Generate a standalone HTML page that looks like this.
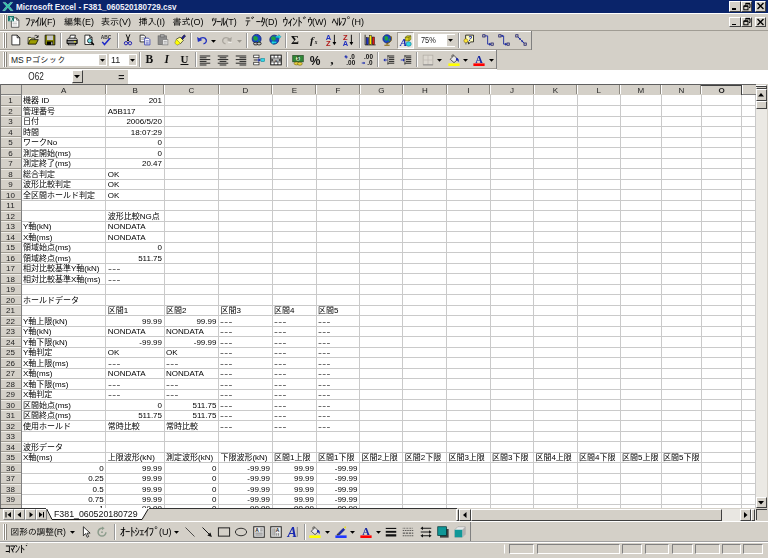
<!DOCTYPE html><html lang="ja"><head><meta charset="utf-8"><title>Microsoft Excel - F381_060520180729.csv</title><style>
html,body{margin:0;padding:0;}
body{width:768px;height:558px;overflow:hidden;background:#d4d0c8;position:relative;filter:blur(0.3px);font-family:"Liberation Sans","IPAGothic","Noto Sans CJK JP",sans-serif;color:#000;}
.a{position:absolute;}
.t{position:absolute;white-space:nowrap;line-height:1;}
.ui{font-size:9px;}
.cell{font-size:8px;color:#000;font-family:"Liberation Sans","Noto Sans CJK JP","IPAGothic",sans-serif;}
.dash{letter-spacing:.3px;transform:scaleX(1.45);transform-origin:0 50%;}
.hk{font-size:11.6px;letter-spacing:-1.05px;line-height:0;position:relative;top:1.3px;}
.hl{position:absolute;height:1px;background:#cacaca;left:21px;}
.vl{position:absolute;width:1px;background:#cacaca;}
.hd{position:absolute;background:#d4d0c8;font-size:8px;text-align:center;color:#222;line-height:1;}
.sep{position:absolute;width:1px;background:#808080;box-shadow:1px 0 0 #fff;}
.grip{position:absolute;width:2px;border-left:1px solid #fff;border-right:1px solid #808080;box-sizing:border-box;}
.btn3d{position:absolute;box-sizing:border-box;background:#d4d0c8;border:1px solid;border-color:#fff #404040 #404040 #fff;}
.sunk{position:absolute;box-sizing:border-box;border:1px solid;border-color:#808080 #fff #fff #808080;}
svg{position:absolute;overflow:visible;}
</style></head><body>
<div class="a" style="left:0;top:0;width:768px;height:12.8px;background:#0a246a"></div>
<div class="t" style="left:15.5px;top:2.2px;font-size:9.6px;font-weight:bold;color:#eef0fa;transform:scaleX(0.848);transform-origin:0 50%" id="title">Microsoft Excel - F381_060520180729.csv</div>
<svg style="left:2px;top:1.3px" width="11" height="11" viewBox="0 0 16 16"><rect x="0" y="0" width="16" height="16" fill="none"/><path d="M1.500 2l5 5.500l-5.500 6.500h3.500l4-4.800l4 4.800h3.500l-5.500-6.500l5-5.500h-3.500l-3.500 3.800l-3.500-3.800z" fill="#2cc8a8" stroke="#bff5e8" stroke-width=".6"/></svg><div class="btn3d" style="left:729px;top:1.2px;width:11.5px;height:10.500px"></div><div class="a" style="left:731.5px;top:8.2px;width:4.500px;height:1.500px;background:#000"></div><div class="btn3d" style="left:740.6px;top:1.2px;width:11.5px;height:10.500px"></div><svg style="left:742.6px;top:2.7px" width="8" height="8" viewBox="0 0 8 8"><path d="M2.500 0.800h4.500v3.800h-1M2.500 1.500v1" fill="none" stroke="#000" stroke-width="1"/><path d="M2.500 0.500h4.500" stroke="#000" stroke-width="1.400"/><rect x="0.800" y="3.200" width="4.200" height="3.600" fill="none" stroke="#000" stroke-width="1"/><path d="M0.800 3h4.200" stroke="#000" stroke-width="1.400"/></svg><div class="btn3d" style="left:754.5px;top:1.2px;width:11.5px;height:10.500px"></div><svg style="left:756.7px;top:3.4px" width="7" height="6" viewBox="0 0 7 6"><path d="M0.500 0l6 6M6.500 0l-6 6" stroke="#000" stroke-width="1.400"/></svg>
<div class="a" style="left:0;top:13.2px;width:768px;height:1px;background:#fff"></div>
<div class="t ui menu" style="left:24px;top:17px;width:32.5px;text-align:center;line-height:11px"><span class="hk">ﾌｧｲﾙ</span>(F)</div>
<div class="t ui menu" style="left:64px;top:17px;width:30px;text-align:center;line-height:11px">編集(E)</div>
<div class="t ui menu" style="left:101px;top:17px;width:30px;text-align:center;line-height:11px">表示(V)</div>
<div class="t ui menu" style="left:138.5px;top:17px;width:26.5px;text-align:center;line-height:11px">挿入(I)</div>
<div class="t ui menu" style="left:172.5px;top:17px;width:29px;text-align:center;line-height:11px">書式(O)</div>
<div class="t ui menu" style="left:209px;top:17px;width:30px;text-align:center;line-height:11px"><span class="hk">ﾂｰﾙ</span>(T)</div>
<div class="t ui menu" style="left:245px;top:17px;width:31px;text-align:center;line-height:11px"><span class="hk">ﾃﾞｰﾀ</span>(D)</div>
<div class="t ui menu" style="left:282.5px;top:17px;width:42.5px;text-align:center;line-height:11px"><span class="hk">ｳｨﾝﾄﾞｳ</span>(W)</div>
<div class="t ui menu" style="left:331.5px;top:17px;width:30px;text-align:center;line-height:11px"><span class="hk">ﾍﾙﾌﾟ</span>(H)</div>
<div class="a" style="left:0;top:29.8px;width:768px;height:1px;background:#a09c94"></div>
<div class="a" style="left:0;top:30.8px;width:768px;height:1px;background:#fff"></div>
<div class="a" style="left:0;top:48.9px;width:768px;height:1px;background:#a09c94"></div>
<div class="a" style="left:0;top:49.9px;width:768px;height:1px;background:#fff"></div>
<div class="a" style="left:0;top:68px;width:768px;height:1px;background:#a09c94"></div>
<div class="a" style="left:0;top:69px;width:768px;height:1px;background:#fff"></div>
<svg style="left:8px;top:16px" width="12" height="12" viewBox="0 0 16 16"><path d="M4.500 2.500h7l3 3v9.500h-10z" fill="#fff" stroke="#333"/><path d="M11.500 2.500v3h3" fill="none" stroke="#333"/><path d="M6 8h6M6 10h6M6 12h6" stroke="#aaa" stroke-width=".8"/><rect x="0" y="0" width="8" height="7" fill="#18786c"/><text x="4" y="6" font-size="6.500" font-weight="bold" text-anchor="middle" style="font-family:'Liberation Sans',sans-serif" fill="#fff">X</text></svg><div class="btn3d" style="left:729px;top:16.5px;width:11.5px;height:10.500px"></div><div class="a" style="left:731.5px;top:23.5px;width:4.500px;height:1.500px;background:#000"></div><div class="btn3d" style="left:740.6px;top:16.5px;width:11.5px;height:10.500px"></div><svg style="left:742.6px;top:18px" width="8" height="8" viewBox="0 0 8 8"><path d="M2.500 0.800h4.500v3.800h-1M2.500 1.500v1" fill="none" stroke="#000" stroke-width="1"/><path d="M2.500 0.500h4.500" stroke="#000" stroke-width="1.400"/><rect x="0.800" y="3.200" width="4.200" height="3.600" fill="none" stroke="#000" stroke-width="1"/><path d="M0.800 3h4.200" stroke="#000" stroke-width="1.400"/></svg><div class="btn3d" style="left:754.5px;top:16.5px;width:11.5px;height:10.500px"></div><svg style="left:756.7px;top:18.7px" width="7" height="6" viewBox="0 0 7 6"><path d="M0.500 0l6 6M6.500 0l-6 6" stroke="#000" stroke-width="1.400"/></svg><div class="a" style="left:2.5px;top:15px;width:1px;height:14px;background:#fff"></div><div class="a" style="left:3.5px;top:15px;width:1px;height:14px;background:#8c8880"></div><div class="a" style="left:4.8px;top:15px;width:1px;height:14px;background:#fff"></div><div class="a" style="left:5.8px;top:15px;width:1px;height:14px;background:#8c8880"></div><div class="a" style="left:2.5px;top:32.5px;width:1px;height:15.5px;background:#fff"></div><div class="a" style="left:3.5px;top:32.5px;width:1px;height:15.5px;background:#8c8880"></div><div class="a" style="left:4.8px;top:32.5px;width:1px;height:15.5px;background:#fff"></div><div class="a" style="left:5.8px;top:32.5px;width:1px;height:15.5px;background:#8c8880"></div><svg style="left:9.5px;top:34.2px" width="12" height="12" viewBox="0 0 16 16"><path d="M2.5 1.5h7l3.5 3.5v9.5h-10.5z" fill="#fff" stroke="#000"/><path d="M9.5 1.5v3.5h3.5" fill="none" stroke="#000"/></svg><svg style="left:27px;top:34.2px" width="12" height="12" viewBox="0 0 16 16"><path d="M1.5 13.5v-9h3l1 1h5v2" fill="#ffff9c" stroke="#000"/><path d="M1.5 13.5l2.5-6h11l-3 6z" fill="#9c9c00" stroke="#000"/><path d="M10 2.5c2-1.5 4-.5 4.5 1.5M14.8 1.5v3h-3" fill="none" stroke="#000"/></svg><svg style="left:44.3px;top:34.2px" width="12" height="12" viewBox="0 0 16 16"><path d="M1.5 1.5h13v13h-12l-1-1z" fill="#808000" stroke="#000"/><rect x="4" y="2" width="8" height="6" fill="#c6c6c6"/><rect x="4" y="10" width="8" height="4.5" fill="#000"/><rect x="9.5" y="11" width="1.8" height="3" fill="#c6c6c6"/></svg><svg style="left:66px;top:34.2px" width="12" height="12" viewBox="0 0 16 16"><path d="M4.5 6.5l1.5-5h6.5l-1 5z" fill="#fff" stroke="#000"/><path d="M1.5 7.5l2-2h10l1.500 2v5h-13.500z" fill="#c6c6c6" stroke="#000"/><rect x="1.500" y="8.5" width="13" height="4" fill="#848484" stroke="#000"/><rect x="3" y="12.500" width="10" height="2" fill="#fff" stroke="#000"/><rect x="10.5" y="9.800" width="2.500" height="1.200" fill="#ffff00"/></svg><svg style="left:83px;top:34.2px" width="12" height="12" viewBox="0 0 16 16"><path d="M2.500 1.500h6.500l3 3v9.500h-9.500z" fill="#fff" stroke="#000"/><path d="M9 1.500v3h3" fill="none" stroke="#000"/><circle cx="9" cy="9" r="3" fill="#7ce0e8" stroke="#000"/><path d="M11.200 11.200l3.300 3.300" stroke="#000" stroke-width="2"/></svg><svg style="left:100.3px;top:34.2px" width="12" height="12" viewBox="0 0 16 16"><text x="8" y="6.200" font-size="6.500" font-weight="bold" text-anchor="middle" style="font-family:'Liberation Sans',sans-serif" fill="#333">ABC</text><path d="M3 10.500l3 3.500l7-8" fill="none" stroke="#1c28c8" stroke-width="2"/></svg><svg style="left:121.5px;top:34.2px" width="12" height="12" viewBox="0 0 16 16"><path d="M5.500 0.500l3.500 9M10.500 0.500l-3.500 9" stroke="#000" stroke-width="1.200" fill="none"/><circle cx="5.300" cy="12.300" r="2.200" fill="none" stroke="#2020b0" stroke-width="1.300"/><circle cx="10.700" cy="12.300" r="2.200" fill="none" stroke="#2020b0" stroke-width="1.300"/></svg><svg style="left:139px;top:34.2px" width="12" height="12" viewBox="0 0 16 16"><path d="M1.500 1.500h5l2 2v7h-7z" fill="#fff" stroke="#000"/><path d="M3 5h4M3 7h4" stroke="#555" stroke-width=".8"/><path d="M7.500 5.500h5l2 2v7h-7z" fill="#fff" stroke="#1c28a8"/><path d="M9 9h4M9 11h4M9 13h4" stroke="#1c28a8" stroke-width=".8"/></svg><svg style="left:156.5px;top:34.2px" width="12" height="12" viewBox="0 0 16 16"><rect x="1.500" y="2.500" width="11" height="11.500" fill="#8c8c8c" stroke="#6a6a6a"/><rect x="4.500" y="1" width="5" height="3" fill="#b0b0b0" stroke="#6a6a6a"/><rect x="7.500" y="7.500" width="7" height="7" fill="#e8e8e8" stroke="#808080"/><path d="M9 10h4M9 12h4" stroke="#909090" stroke-width=".8"/></svg><svg style="left:174px;top:34.2px" width="12" height="12" viewBox="0 0 16 16"><path d="M9.500 5.500l4-4.500l2 1.800l-4 4.500z" fill="#202090" stroke="#000" stroke-width=".6"/><path d="M3 7l5-3l4.500 4.500l-4 4.500z" fill="#ffff80" stroke="#000" stroke-width=".8"/><path d="M3 7l-2 5l3 3l4.500-2.200" fill="#ffff00" stroke="#555" stroke-width=".6"/></svg><svg style="left:195.5px;top:34.2px" width="12" height="12" viewBox="0 0 16 16"><path d="M4 7.500c3-3.500 8-3.500 9.500 0c1 2.500-.500 5-3.500 5.500" fill="none" stroke="#2030c0" stroke-width="1.800"/><path d="M1.500 4l1 6.500l6-2.500z" fill="#2030c0"/></svg><svg style="left:220.7px;top:34.2px" width="12" height="12" viewBox="0 0 16 16"><path d="M12 7.500c-3-3.500-8-3.500-9.500 0c-1 2.500.500 5 3.500 5.500" fill="none" stroke="#aaa69e" stroke-width="1.800"/><path d="M14.500 4l-1 6.500l-6-2.500z" fill="#aaa69e"/><path d="M14.500 11l-5 .500" stroke="#fff" stroke-width=".800"/></svg><svg style="left:250.7px;top:34.2px" width="12" height="12" viewBox="0 0 16 16"><circle cx="7.500" cy="6.500" r="6" fill="#1848c8" stroke="#102070"/><path d="M4 3c2-1 4 0 5 2s-1 4-3 4s-3-2-3-4z" fill="#20a040"/><path d="M10 8c1 0 2 1 2 2.500l-2 1z" fill="#20a040"/><rect x="3.500" y="11" width="5.500" height="3.500" rx="1.700" fill="#c6c6c6" stroke="#000" stroke-width="1"/><rect x="8" y="11" width="5.500" height="3.500" rx="1.700" fill="#c6c6c6" stroke="#000" stroke-width="1"/></svg><svg style="left:268.5px;top:34.2px" width="12" height="12" viewBox="0 0 16 16"><circle cx="7" cy="7.500" r="6" fill="#1848c8" stroke="#102070"/><path d="M3 4c2-2 5-1 6 1s-1 4-3 4s-4-2-3-5z" fill="#20a040"/><path d="M9 2.500h4v-1.800l3 3l-3 3v-1.800h-4z" fill="#18d8e8" stroke="#0a6a80" stroke-width=".5"/><path d="M10 10h-4v-1.800l-3 3l3 3v-1.800h4z" fill="#18d8e8" stroke="#0a6a80" stroke-width=".5"/></svg><svg style="left:289px;top:34.2px" width="12" height="12" viewBox="0 0 16 16"><text x="8" y="13.500" font-size="16" font-weight="bold" text-anchor="middle" style="font-family:'Liberation Serif',serif" fill="#111">Σ</text></svg><svg style="left:307px;top:34.2px" width="12" height="12" viewBox="0 0 16 16"><text x="6.500" y="13" font-size="15" font-weight="bold" font-style="italic" text-anchor="middle" style="font-family:'Liberation Serif',serif" fill="#111">f</text><text x="12" y="13.500" font-size="7" font-weight="bold" font-style="italic" text-anchor="middle" style="font-family:'Liberation Serif',serif" fill="#111">x</text></svg><svg style="left:324.5px;top:34.2px" width="12" height="12" viewBox="0 0 16 16"><text x="4.500" y="7.500" font-size="10" font-weight="bold" text-anchor="middle" style="font-family:'Liberation Sans',sans-serif" fill="#2030c0">A</text><text x="4.500" y="15.500" font-size="10" font-weight="bold" text-anchor="middle" style="font-family:'Liberation Sans',sans-serif" fill="#b01818">Z</text><path d="M12.500 1v11" stroke="#000" stroke-width="1.200"/><path d="M10 10.500h5l-2.500 4.500z" fill="#000"/></svg><svg style="left:342px;top:34.2px" width="12" height="12" viewBox="0 0 16 16"><text x="4.500" y="7.500" font-size="10" font-weight="bold" text-anchor="middle" style="font-family:'Liberation Sans',sans-serif" fill="#b01818">Z</text><text x="4.500" y="15.500" font-size="10" font-weight="bold" text-anchor="middle" style="font-family:'Liberation Sans',sans-serif" fill="#2030c0">A</text><path d="M12.500 1v11" stroke="#000" stroke-width="1.200"/><path d="M10 10.500h5l-2.500 4.500z" fill="#000"/></svg><svg style="left:363.5px;top:34.2px" width="12" height="12" viewBox="0 0 16 16"><path d="M1.500 1v13.500h14" fill="none" stroke="#000"/><rect x="3" y="5" width="3" height="9" fill="#2030c8" stroke="#000" stroke-width=".6"/><rect x="7" y="2" width="3" height="12" fill="#ffe800" stroke="#000" stroke-width=".6"/><rect x="11" y="4" width="3" height="10" fill="#e01818" stroke="#000" stroke-width=".6"/></svg><svg style="left:381px;top:34.2px" width="12" height="12" viewBox="0 0 16 16"><circle cx="8" cy="6.500" r="5.500" fill="#1848c8" stroke="#102070"/><path d="M5 3c2-1 4 0 4.500 2s-1 4-2.500 4s-3-3-2-6z" fill="#20a040"/><path d="M10.500 6c1 0 2 1 1.500 3l-2 1z" fill="#20a040"/><path d="M13 2.500c2.500 4 .5 9-5 10" fill="none" stroke="#806000" stroke-width="1.200"/><path d="M8 12v2.500M4.500 15h7" stroke="#806000" stroke-width="1.300"/></svg><svg style="left:211.2px;top:39.5px" width="5" height="3" viewBox="0 0 5 3"><path d="M0 0h5l-2.5 2.8z" fill="#000"/></svg><svg style="left:236.5px;top:39.5px" width="5" height="3" viewBox="0 0 5 3"><path d="M0 0h5l-2.5 2.8z" fill="#9a968e"/></svg><div class="sep" style="left:59.8px;top:32.5px;height:15px;background:#989898"></div><div class="sep" style="left:117px;top:32.5px;height:15px;background:#989898"></div><div class="sep" style="left:189.5px;top:32.5px;height:15px;background:#989898"></div><div class="sep" style="left:245.5px;top:32.5px;height:15px;background:#989898"></div><div class="sep" style="left:284.5px;top:32.5px;height:15px;background:#989898"></div><div class="sep" style="left:358.5px;top:32.5px;height:15px;background:#989898"></div><div class="sep" style="left:457.5px;top:32.5px;height:15px;background:#989898"></div><div class="sunk" style="left:396.500px;top:32px;width:17px;height:16.500px;background:#ebe9e4;border-color:#a09c94 #fff #fff #a09c94"></div><svg style="left:399.5px;top:34.7px" width="12" height="12" viewBox="0 0 16 16"><text x="4.500" y="14" font-size="14" font-weight="bold" font-style="italic" text-anchor="middle" style="font-family:'Liberation Serif',serif" fill="#1828b0">A</text><path d="M7 3l2.500-2h5v5l-2.500 2h-5z" fill="#d8d020" stroke="#404000" stroke-width=".7"/><path d="M7 3h5v5M12 3l2.500-2" fill="none" stroke="#404000" stroke-width=".7"/><ellipse cx="11.500" cy="12" rx="3.500" ry="3" fill="#30d8e8" stroke="#106878" stroke-width=".7"/></svg><div class="a" style="left:418px;top:34px;width:37px;height:12.500px;background:#fff"></div><div class="t" style="left:420.500px;top:35.500px;font-size:9px;color:#222;transform:scaleX(0.82);transform-origin:0 50%">75%</div><div class="a" style="left:447px;top:35px;width:7.500px;height:10.500px;background:#d4d0c8"></div><svg style="left:448.3px;top:39.3px" width="5" height="3" viewBox="0 0 5 3"><path d="M0 0h5l-2.5 2.8z" fill="#000"/></svg><svg style="left:463px;top:34.2px" width="12" height="12" viewBox="0 0 16 16"><path d="M3.500 1.500h10.500v9h-4l-2.500 3v-3h-4z" fill="#ffffc0" stroke="#000"/><text x="9.500" y="9.500" font-size="9" font-weight="bold" font-style="italic" text-anchor="middle" style="font-family:'Liberation Sans',sans-serif" fill="#1828b0">?</text><circle cx="3.800" cy="9" r="2.600" fill="#ffe838" stroke="#806000" stroke-width=".7"/><rect x="2.800" y="11.500" width="2" height="2.500" fill="#808080"/></svg><svg style="left:481.5px;top:34.2px" width="12" height="12" viewBox="0 0 16 16"><rect x="1" y="1" width="3" height="3" fill="none" stroke="#101060" stroke-width="1"/><rect x="12" y="12" width="3" height="3" fill="none" stroke="#101060" stroke-width="1"/><path d="M4 2.500h3.500v11h4.500" fill="none" stroke="#1828a0" stroke-width="1.200"/><path d="M9.500 11.500l2.500 2l-2.500 2z" fill="#1828a0"/></svg><svg style="left:497.7px;top:34.2px" width="12" height="12" viewBox="0 0 16 16"><rect x="1" y="1" width="3" height="3" fill="none" stroke="#101060" stroke-width="1"/><rect x="12" y="12" width="3" height="3" fill="none" stroke="#101060" stroke-width="1"/><path d="M4 2.500h3.500v11h4.500" fill="none" stroke="#1828a0" stroke-width="1.200"/><path d="M9.500 11.500l2.500 2l-2.500 2z" fill="#1828a0"/><path d="M6.500 1l-2.500 1.500l2.500 1.500z" fill="#1828a0"/></svg><svg style="left:515px;top:34.2px" width="12" height="12" viewBox="0 0 16 16"><rect x="1" y="1" width="3" height="3" fill="none" stroke="#101060" stroke-width="1"/><rect x="12" y="12" width="3" height="3" fill="none" stroke="#101060" stroke-width="1"/><path d="M4 4l8 8" fill="none" stroke="#1828a0" stroke-width="1.200"/><path d="M5 5l3 .5l-2.500 2.500zM11 11l-3-.5l2.500-2.500z" fill="#1828a0"/></svg><div class="a" style="left:531px;top:31px;width:1px;height:18.500px;background:#808080"></div><div class="a" style="left:532px;top:31.300px;width:236px;height:19.500px;background:#d4d0c8"></div><div class="a" style="left:2.5px;top:51.5px;width:1px;height:15.5px;background:#fff"></div><div class="a" style="left:3.5px;top:51.5px;width:1px;height:15.5px;background:#8c8880"></div><div class="a" style="left:4.8px;top:51.5px;width:1px;height:15.5px;background:#fff"></div><div class="a" style="left:5.8px;top:51.5px;width:1px;height:15.5px;background:#8c8880"></div><div class="a" style="left:9px;top:54px;width:98px;height:11.500px;background:#fff"></div><div class="t" style="left:11px;top:55.800px;font-size:8.500px;color:#222" id="fontname">MS Pゴシック</div><div class="a" style="left:99px;top:55px;width:7px;height:9.500px;background:#d4d0c8"></div><svg style="left:100px;top:58.8px" width="5" height="3" viewBox="0 0 5 3"><path d="M0 0h5l-2.5 2.8z" fill="#000"/></svg><div class="a" style="left:109px;top:54px;width:27.500px;height:11.500px;background:#fff"></div><div class="t" style="left:111px;top:55.600px;font-size:9px;color:#222">11</div><div class="a" style="left:128.500px;top:55px;width:7px;height:9.500px;background:#d4d0c8"></div><svg style="left:129.5px;top:58.8px" width="5" height="3" viewBox="0 0 5 3"><path d="M0 0h5l-2.5 2.8z" fill="#000"/></svg><div class="t" style="left:145.500px;top:53.500px;font-size:11.500px;font-weight:bold;font-family:'Liberation Serif',serif;color:#111">B</div><div class="t" style="left:164.500px;top:53.500px;font-size:11.500px;font-weight:bold;font-style:italic;font-family:'Liberation Serif',serif;color:#111">I</div><div class="t" style="left:180.500px;top:53.500px;font-size:11px;font-weight:bold;text-decoration:underline;font-family:'Liberation Serif',serif;color:#111">U</div><svg style="left:199px;top:53.5px" width="12" height="12" viewBox="0 0 16 16"><rect x="1" y="2" width="14" height="1.300" fill="#222"/><rect x="1" y="4.4" width="9" height="1.300" fill="#222"/><rect x="1" y="6.8" width="14" height="1.300" fill="#222"/><rect x="1" y="9.2" width="9" height="1.300" fill="#222"/><rect x="1" y="11.6" width="14" height="1.300" fill="#222"/><rect x="1" y="14" width="9" height="1.300" fill="#222"/></svg><svg style="left:217px;top:53.5px" width="12" height="12" viewBox="0 0 16 16"><rect x="1" y="2" width="14" height="1.300" fill="#222"/><rect x="3.5" y="4.4" width="9" height="1.300" fill="#222"/><rect x="1" y="6.8" width="14" height="1.300" fill="#222"/><rect x="3.5" y="9.2" width="9" height="1.300" fill="#222"/><rect x="1" y="11.6" width="14" height="1.300" fill="#222"/><rect x="3.5" y="14" width="9" height="1.300" fill="#222"/></svg><svg style="left:234.5px;top:53.5px" width="12" height="12" viewBox="0 0 16 16"><rect x="1" y="2" width="14" height="1.300" fill="#222"/><rect x="6" y="4.4" width="9" height="1.300" fill="#222"/><rect x="1" y="6.8" width="14" height="1.300" fill="#222"/><rect x="6" y="9.2" width="9" height="1.300" fill="#222"/><rect x="1" y="11.6" width="14" height="1.300" fill="#222"/><rect x="6" y="14" width="9" height="1.300" fill="#222"/></svg><svg style="left:252.5px;top:53.5px" width="12" height="12" viewBox="0 0 16 16"><rect x="1" y="1.500" width="7" height="3.500" fill="#fff" stroke="#000" stroke-width=".8"/><rect x="1" y="11" width="7" height="3.500" fill="#fff" stroke="#000" stroke-width=".8"/><path d="M1 8h5" stroke="#000"/><path d="M5 8h4M7.500 6l2.500 2l-2.500 2z" fill="#1828b0" stroke="#1828b0" stroke-width=".8"/><rect x="10.500" y="5.800" width="5" height="4.400" fill="#30d8e8" stroke="#106878" stroke-width=".6"/></svg><svg style="left:270px;top:53.5px" width="12" height="12" viewBox="0 0 16 16"><rect x="1" y="1.500" width="14" height="13" fill="#fff" stroke="#000" stroke-width="1.200"/><path d="M1 5.500h14M1 10.500h14M5.500 1.500v4M10.500 1.500v4M5.500 10.500v4M10.500 10.500v4" stroke="#000" stroke-width=".9"/><path d="M2 8h12" stroke="#000" stroke-width=".8"/><path d="M2 6.300l2.500 1.700l-2.500 1.700zM14 6.300l-2.500 1.700l2.500 1.700z" fill="#000"/><text x="8" y="10" font-size="5" text-anchor="middle" style="font-family:'Liberation Sans',sans-serif" fill="#000">a</text></svg><svg style="left:291.5px;top:53.5px" width="12" height="12" viewBox="0 0 16 16"><rect x="1" y="2" width="14" height="8.500" fill="#308838" stroke="#103810" stroke-width=".8"/><ellipse cx="8" cy="6.200" rx="3" ry="2.800" fill="#c8e8c0"/><text x="8" y="8.500" font-size="6" font-weight="bold" text-anchor="middle" style="font-family:'Liberation Sans',sans-serif" fill="#103810">$</text><ellipse cx="6" cy="12.500" rx="3.200" ry="2" fill="#e8d040" stroke="#605000" stroke-width=".7"/><ellipse cx="10.500" cy="13" rx="3.200" ry="2" fill="#e8d040" stroke="#605000" stroke-width=".7"/></svg><svg style="left:309px;top:53.5px" width="12" height="12" viewBox="0 0 16 16"><text x="8" y="14" font-size="16" font-weight="bold" text-anchor="middle" style="font-family:'Liberation Sans',sans-serif" fill="#111">%</text></svg><svg style="left:325.5px;top:53.5px" width="12" height="12" viewBox="0 0 16 16"><text x="8" y="13" font-size="18" font-weight="bold" text-anchor="middle" style="font-family:'Liberation Serif',serif" fill="#111">,</text></svg><svg style="left:343.5px;top:53.5px" width="12" height="12" viewBox="0 0 16 16"><path d="M1 4h4M3 2v4" stroke="#1828b0" stroke-width="1.200"/><path d="M0.500 3l2-1.500v3z" fill="#1828b0"/><text x="11" y="7" font-size="8.500" font-weight="bold" text-anchor="middle" style="font-family:'Liberation Sans',sans-serif" fill="#111">.0</text><text x="9" y="15" font-size="8.500" font-weight="bold" text-anchor="middle" style="font-family:'Liberation Sans',sans-serif" fill="#111">.00</text></svg><svg style="left:360.5px;top:53.5px" width="12" height="12" viewBox="0 0 16 16"><text x="10" y="7" font-size="8.500" font-weight="bold" text-anchor="middle" style="font-family:'Liberation Sans',sans-serif" fill="#111">.00</text><path d="M1 12h4" stroke="#1828b0" stroke-width="1.200"/><path d="M5.500 12l-2-1.800v3.600z" fill="#1828b0"/><text x="12" y="15" font-size="8.500" font-weight="bold" text-anchor="middle" style="font-family:'Liberation Sans',sans-serif" fill="#111">.0</text></svg><svg style="left:382.7px;top:53.5px" width="12" height="12" viewBox="0 0 16 16"><rect x="6" y="2" width="9" height="1.300" fill="#222"/><rect x="8" y="4.4" width="7" height="1.300" fill="#222"/><rect x="8" y="6.8" width="7" height="1.300" fill="#222"/><rect x="8" y="9.2" width="7" height="1.300" fill="#222"/><rect x="6" y="11.6" width="9" height="1.300" fill="#222"/><path d="M6 8h-4" stroke="#1828b0" stroke-width="1.200"/><path d="M0.500 8l2.500-2.200v4.400z" fill="#1828b0"/><path d="M6.500 1.500v13" stroke="#222" stroke-width=".8"/></svg><svg style="left:400.2px;top:53.5px" width="12" height="12" viewBox="0 0 16 16"><rect x="6" y="2" width="9" height="1.300" fill="#222"/><rect x="8" y="4.4" width="7" height="1.300" fill="#222"/><rect x="8" y="6.8" width="7" height="1.300" fill="#222"/><rect x="8" y="9.2" width="7" height="1.300" fill="#222"/><rect x="6" y="11.6" width="9" height="1.300" fill="#222"/><path d="M1 8h4" stroke="#1828b0" stroke-width="1.200"/><path d="M6.500 8l-2.500-2.200v4.400z" fill="#1828b0"/><path d="M6.500 1.500v13" stroke="#222" stroke-width=".8"/></svg><svg style="left:422.2px;top:53.5px" width="12" height="12" viewBox="0 0 16 16"><rect x="1.500" y="1.500" width="13" height="13" fill="#dcd8d0" stroke="#a8a49c" stroke-width=".8"/><path d="M1.500 8h13M8 1.500v13" stroke="#b8b4ac" stroke-width=".8"/><path d="M1.500 14.500h13" stroke="#888" stroke-width="1.200"/></svg><svg style="left:447.5px;top:53.5px" width="12" height="12" viewBox="0 0 16 16"><path d="M3 7l5-5l5 5l-5 4.500z" fill="#e8e8e8" stroke="#000" stroke-width=".8"/><path d="M8 2c-2-2-3.500 0-2.500 2" fill="none" stroke="#000" stroke-width=".8"/><path d="M11 5c3 0 4 3 3 6c-1-2-2-3-3.500-3z" fill="#1828b0"/><rect x="0.500" y="12.500" width="15" height="3.500" fill="#ffff00"/></svg><svg style="left:472.7px;top:53.5px" width="12" height="12" viewBox="0 0 16 16"><text x="8" y="11.500" font-size="14" font-weight="bold" text-anchor="middle" style="font-family:'Liberation Serif',serif" fill="#1828a0">A</text><rect x="0.500" y="12.500" width="15" height="3.500" fill="#ff0000"/></svg><svg style="left:437px;top:58.8px" width="5" height="3" viewBox="0 0 5 3"><path d="M0 0h5l-2.5 2.8z" fill="#000"/></svg><svg style="left:462.5px;top:58.8px" width="5" height="3" viewBox="0 0 5 3"><path d="M0 0h5l-2.5 2.8z" fill="#000"/></svg><svg style="left:488.5px;top:58.8px" width="5" height="3" viewBox="0 0 5 3"><path d="M0 0h5l-2.5 2.8z" fill="#000"/></svg><div class="sep" style="left:138.5px;top:51.5px;height:15px;background:#989898"></div><div class="sep" style="left:194.5px;top:51.5px;height:15px;background:#989898"></div><div class="sep" style="left:285.5px;top:51.5px;height:15px;background:#989898"></div><div class="sep" style="left:376.5px;top:51.5px;height:15px;background:#989898"></div><div class="sep" style="left:415.5px;top:51.5px;height:15px;background:#989898"></div><div class="a" style="left:496px;top:50px;width:1px;height:18.500px;background:#808080"></div><div class="a" style="left:497px;top:50.400px;width:271px;height:19.600px;background:#d4d0c8"></div>
<div class="a" style="left:0;top:70px;width:768px;height:14px;background:#d4d0c8"></div>
<div class="a" style="left:0;top:70px;width:72px;height:13.5px;background:#fff"></div>
<div class="t" style="left:0;top:72.3px;width:72px;text-align:center;font-size:10px;color:#222;transform:scaleX(0.82)">O62</div>
<div class="btn3d" style="left:72px;top:69.8px;width:10.5px;height:13.2px"></div>
<svg style="left:73.8px;top:75px" width="6" height="4"><path d="M0 0h6l-3 3.2z" fill="#000"/></svg>
<div class="a" style="left:118.5px;top:74.8px;width:5px;height:1.4px;background:#111"></div><div class="a" style="left:118.5px;top:77.6px;width:5px;height:1.4px;background:#111"></div>
<div class="t" style="left:118px;top:72.5px;font-size:10px;font-weight:bold;color:#222;opacity:0.55">=</div>
<div class="a" style="left:128px;top:70px;width:640px;height:13.5px;background:#fff"></div>
<div class="a" style="left:0;top:83.5px;width:768px;height:1.5px;background:#d4d0c8"></div>
<div class="a" style="left:0;top:85px;width:755.5px;height:423px;background:#fff"></div>
<div class="hl" style="top:105.4px;width:734.5px"></div>
<div class="hl" style="top:115.9px;width:734.5px"></div>
<div class="hl" style="top:126.4px;width:734.5px"></div>
<div class="hl" style="top:136.9px;width:734.5px"></div>
<div class="hl" style="top:147.4px;width:734.5px"></div>
<div class="hl" style="top:157.9px;width:734.5px"></div>
<div class="hl" style="top:168.4px;width:734.5px"></div>
<div class="hl" style="top:178.9px;width:734.5px"></div>
<div class="hl" style="top:189.4px;width:734.5px"></div>
<div class="hl" style="top:199.9px;width:734.5px"></div>
<div class="hl" style="top:210.4px;width:734.5px"></div>
<div class="hl" style="top:220.9px;width:734.5px"></div>
<div class="hl" style="top:231.4px;width:734.5px"></div>
<div class="hl" style="top:241.9px;width:734.5px"></div>
<div class="hl" style="top:252.4px;width:734.5px"></div>
<div class="hl" style="top:262.9px;width:734.5px"></div>
<div class="hl" style="top:273.4px;width:734.5px"></div>
<div class="hl" style="top:283.9px;width:734.5px"></div>
<div class="hl" style="top:294.4px;width:734.5px"></div>
<div class="hl" style="top:304.9px;width:734.5px"></div>
<div class="hl" style="top:315.4px;width:734.5px"></div>
<div class="hl" style="top:325.9px;width:734.5px"></div>
<div class="hl" style="top:336.4px;width:734.5px"></div>
<div class="hl" style="top:346.9px;width:734.5px"></div>
<div class="hl" style="top:357.4px;width:734.5px"></div>
<div class="hl" style="top:367.9px;width:734.5px"></div>
<div class="hl" style="top:378.4px;width:734.5px"></div>
<div class="hl" style="top:388.9px;width:734.5px"></div>
<div class="hl" style="top:399.4px;width:734.5px"></div>
<div class="hl" style="top:409.9px;width:734.5px"></div>
<div class="hl" style="top:420.4px;width:734.5px"></div>
<div class="hl" style="top:430.9px;width:734.5px"></div>
<div class="hl" style="top:441.4px;width:734.5px"></div>
<div class="hl" style="top:451.9px;width:734.5px"></div>
<div class="hl" style="top:462.4px;width:734.5px"></div>
<div class="hl" style="top:472.9px;width:734.5px"></div>
<div class="hl" style="top:483.4px;width:734.5px"></div>
<div class="hl" style="top:493.9px;width:734.5px"></div>
<div class="hl" style="top:504.4px;width:734.5px"></div>
<div class="vl" style="left:105.3px;top:95px;height:413px"></div>
<div class="vl" style="left:163.6px;top:95px;height:413px"></div>
<div class="vl" style="left:218px;top:95px;height:413px"></div>
<div class="vl" style="left:271.6px;top:95px;height:413px"></div>
<div class="vl" style="left:315.6px;top:95px;height:413px"></div>
<div class="vl" style="left:359px;top:95px;height:413px"></div>
<div class="vl" style="left:402.3px;top:95px;height:413px"></div>
<div class="vl" style="left:446px;top:95px;height:413px"></div>
<div class="vl" style="left:489.6px;top:95px;height:413px"></div>
<div class="vl" style="left:533px;top:95px;height:413px"></div>
<div class="vl" style="left:576.6px;top:95px;height:413px"></div>
<div class="vl" style="left:619.6px;top:95px;height:413px"></div>
<div class="vl" style="left:660.6px;top:95px;height:413px"></div>
<div class="vl" style="left:700.6px;top:95px;height:413px"></div>
<div class="vl" style="left:741.3px;top:95px;height:413px"></div>
<div class="vl" style="left:754.8px;top:95px;height:413px"></div>
<div class="a" style="left:0;top:84.5px;width:755.5px;height:10.4px;background:#d4d0c8"></div>
<div class="a" style="left:0;top:83.8px;width:755.5px;height:1px;background:#606060"></div>
<div class="a" style="left:0;top:94.1px;width:755.5px;height:1px;background:#808080"></div>
<div class="hd" style="left:21.3px;top:86.6px;width:84.7px">A</div>
<div class="a" style="left:105px;top:85px;width:1px;height:9px;background:#8c8880"></div>
<div class="a" style="left:21.3px;top:85px;width:1px;height:9px;background:#fff"></div>
<div class="hd" style="left:106px;top:86.6px;width:58.3px">B</div>
<div class="a" style="left:163.3px;top:85px;width:1px;height:9px;background:#8c8880"></div>
<div class="a" style="left:106px;top:85px;width:1px;height:9px;background:#fff"></div>
<div class="hd" style="left:164.3px;top:86.6px;width:54.4px">C</div>
<div class="a" style="left:217.7px;top:85px;width:1px;height:9px;background:#8c8880"></div>
<div class="a" style="left:164.3px;top:85px;width:1px;height:9px;background:#fff"></div>
<div class="hd" style="left:218.7px;top:86.6px;width:53.6px">D</div>
<div class="a" style="left:271.3px;top:85px;width:1px;height:9px;background:#8c8880"></div>
<div class="a" style="left:218.7px;top:85px;width:1px;height:9px;background:#fff"></div>
<div class="hd" style="left:272.3px;top:86.6px;width:44px">E</div>
<div class="a" style="left:315.3px;top:85px;width:1px;height:9px;background:#8c8880"></div>
<div class="a" style="left:272.3px;top:85px;width:1px;height:9px;background:#fff"></div>
<div class="hd" style="left:316.3px;top:86.6px;width:43.4px">F</div>
<div class="a" style="left:358.7px;top:85px;width:1px;height:9px;background:#8c8880"></div>
<div class="a" style="left:316.3px;top:85px;width:1px;height:9px;background:#fff"></div>
<div class="hd" style="left:359.7px;top:86.6px;width:43.3px">G</div>
<div class="a" style="left:402px;top:85px;width:1px;height:9px;background:#8c8880"></div>
<div class="a" style="left:359.7px;top:85px;width:1px;height:9px;background:#fff"></div>
<div class="hd" style="left:403px;top:86.6px;width:43.7px">H</div>
<div class="a" style="left:445.7px;top:85px;width:1px;height:9px;background:#8c8880"></div>
<div class="a" style="left:403px;top:85px;width:1px;height:9px;background:#fff"></div>
<div class="hd" style="left:446.7px;top:86.6px;width:43.6px">I</div>
<div class="a" style="left:489.3px;top:85px;width:1px;height:9px;background:#8c8880"></div>
<div class="a" style="left:446.7px;top:85px;width:1px;height:9px;background:#fff"></div>
<div class="hd" style="left:490.3px;top:86.6px;width:43.4px">J</div>
<div class="a" style="left:532.7px;top:85px;width:1px;height:9px;background:#8c8880"></div>
<div class="a" style="left:490.3px;top:85px;width:1px;height:9px;background:#fff"></div>
<div class="hd" style="left:533.7px;top:86.6px;width:43.6px">K</div>
<div class="a" style="left:576.3px;top:85px;width:1px;height:9px;background:#8c8880"></div>
<div class="a" style="left:533.7px;top:85px;width:1px;height:9px;background:#fff"></div>
<div class="hd" style="left:577.3px;top:86.6px;width:43px">L</div>
<div class="a" style="left:619.3px;top:85px;width:1px;height:9px;background:#8c8880"></div>
<div class="a" style="left:577.3px;top:85px;width:1px;height:9px;background:#fff"></div>
<div class="hd" style="left:620.3px;top:86.6px;width:41px">M</div>
<div class="a" style="left:660.3px;top:85px;width:1px;height:9px;background:#8c8880"></div>
<div class="a" style="left:620.3px;top:85px;width:1px;height:9px;background:#fff"></div>
<div class="hd" style="left:661.3px;top:86.6px;width:40px">N</div>
<div class="a" style="left:700.3px;top:85px;width:1px;height:9px;background:#8c8880"></div>
<div class="a" style="left:661.3px;top:85px;width:1px;height:9px;background:#fff"></div>
<div class="hd" style="left:701.3px;top:86.6px;width:40.7px;font-weight:bold">O</div>
<div class="a" style="left:741px;top:85px;width:1px;height:9px;background:#8c8880"></div>
<div class="a" style="left:701.3px;top:85px;width:1px;height:9px;background:#fff"></div>
<div class="a" style="left:742px;top:85px;width:1px;height:9px;background:#fff"></div>
<div class="a" style="left:701.3px;top:84.5px;width:40.7px;height:1.5px;background:#404040"></div>
<div class="a" style="left:740.5px;top:84.5px;width:1.5px;height:10px;background:#404040"></div>
<div class="a" style="left:0;top:95px;width:21.3px;height:413px;background:#d4d0c8"></div>
<div class="a" style="left:20.5px;top:85px;width:1px;height:423px;background:#808080"></div>
<div class="a" style="left:0;top:104.5px;width:20.5px;height:1px;background:#9c988f"></div>
<div class="a" style="left:0;top:95px;width:20.5px;height:1px;background:#efede8"></div>
<div class="hd" style="left:0;top:97px;width:21px;background:none">1</div>
<div class="a" style="left:0;top:115px;width:20.5px;height:1px;background:#9c988f"></div>
<div class="a" style="left:0;top:105.5px;width:20.5px;height:1px;background:#efede8"></div>
<div class="hd" style="left:0;top:107.5px;width:21px;background:none">2</div>
<div class="a" style="left:0;top:125.5px;width:20.5px;height:1px;background:#9c988f"></div>
<div class="a" style="left:0;top:116px;width:20.5px;height:1px;background:#efede8"></div>
<div class="hd" style="left:0;top:118px;width:21px;background:none">3</div>
<div class="a" style="left:0;top:136px;width:20.5px;height:1px;background:#9c988f"></div>
<div class="a" style="left:0;top:126.5px;width:20.5px;height:1px;background:#efede8"></div>
<div class="hd" style="left:0;top:128.5px;width:21px;background:none">4</div>
<div class="a" style="left:0;top:146.5px;width:20.5px;height:1px;background:#9c988f"></div>
<div class="a" style="left:0;top:137px;width:20.5px;height:1px;background:#efede8"></div>
<div class="hd" style="left:0;top:139px;width:21px;background:none">5</div>
<div class="a" style="left:0;top:157px;width:20.5px;height:1px;background:#9c988f"></div>
<div class="a" style="left:0;top:147.5px;width:20.5px;height:1px;background:#efede8"></div>
<div class="hd" style="left:0;top:149.5px;width:21px;background:none">6</div>
<div class="a" style="left:0;top:167.5px;width:20.5px;height:1px;background:#9c988f"></div>
<div class="a" style="left:0;top:158px;width:20.5px;height:1px;background:#efede8"></div>
<div class="hd" style="left:0;top:160px;width:21px;background:none">7</div>
<div class="a" style="left:0;top:178px;width:20.5px;height:1px;background:#9c988f"></div>
<div class="a" style="left:0;top:168.5px;width:20.5px;height:1px;background:#efede8"></div>
<div class="hd" style="left:0;top:170.5px;width:21px;background:none">8</div>
<div class="a" style="left:0;top:188.5px;width:20.5px;height:1px;background:#9c988f"></div>
<div class="a" style="left:0;top:179px;width:20.5px;height:1px;background:#efede8"></div>
<div class="hd" style="left:0;top:181px;width:21px;background:none">9</div>
<div class="a" style="left:0;top:199px;width:20.5px;height:1px;background:#9c988f"></div>
<div class="a" style="left:0;top:189.5px;width:20.5px;height:1px;background:#efede8"></div>
<div class="hd" style="left:0;top:191.5px;width:21px;background:none">10</div>
<div class="a" style="left:0;top:209.5px;width:20.5px;height:1px;background:#9c988f"></div>
<div class="a" style="left:0;top:200px;width:20.5px;height:1px;background:#efede8"></div>
<div class="hd" style="left:0;top:202px;width:21px;background:none">11</div>
<div class="a" style="left:0;top:220px;width:20.5px;height:1px;background:#9c988f"></div>
<div class="a" style="left:0;top:210.5px;width:20.5px;height:1px;background:#efede8"></div>
<div class="hd" style="left:0;top:212.5px;width:21px;background:none">12</div>
<div class="a" style="left:0;top:230.5px;width:20.5px;height:1px;background:#9c988f"></div>
<div class="a" style="left:0;top:221px;width:20.5px;height:1px;background:#efede8"></div>
<div class="hd" style="left:0;top:223px;width:21px;background:none">13</div>
<div class="a" style="left:0;top:241px;width:20.5px;height:1px;background:#9c988f"></div>
<div class="a" style="left:0;top:231.5px;width:20.5px;height:1px;background:#efede8"></div>
<div class="hd" style="left:0;top:233.5px;width:21px;background:none">14</div>
<div class="a" style="left:0;top:251.5px;width:20.5px;height:1px;background:#9c988f"></div>
<div class="a" style="left:0;top:242px;width:20.5px;height:1px;background:#efede8"></div>
<div class="hd" style="left:0;top:244px;width:21px;background:none">15</div>
<div class="a" style="left:0;top:262px;width:20.5px;height:1px;background:#9c988f"></div>
<div class="a" style="left:0;top:252.5px;width:20.5px;height:1px;background:#efede8"></div>
<div class="hd" style="left:0;top:254.5px;width:21px;background:none">16</div>
<div class="a" style="left:0;top:272.5px;width:20.5px;height:1px;background:#9c988f"></div>
<div class="a" style="left:0;top:263px;width:20.5px;height:1px;background:#efede8"></div>
<div class="hd" style="left:0;top:265px;width:21px;background:none">17</div>
<div class="a" style="left:0;top:283px;width:20.5px;height:1px;background:#9c988f"></div>
<div class="a" style="left:0;top:273.5px;width:20.5px;height:1px;background:#efede8"></div>
<div class="hd" style="left:0;top:275.5px;width:21px;background:none">18</div>
<div class="a" style="left:0;top:293.5px;width:20.5px;height:1px;background:#9c988f"></div>
<div class="a" style="left:0;top:284px;width:20.5px;height:1px;background:#efede8"></div>
<div class="hd" style="left:0;top:286px;width:21px;background:none">19</div>
<div class="a" style="left:0;top:304px;width:20.5px;height:1px;background:#9c988f"></div>
<div class="a" style="left:0;top:294.5px;width:20.5px;height:1px;background:#efede8"></div>
<div class="hd" style="left:0;top:296.5px;width:21px;background:none">20</div>
<div class="a" style="left:0;top:314.5px;width:20.5px;height:1px;background:#9c988f"></div>
<div class="a" style="left:0;top:305px;width:20.5px;height:1px;background:#efede8"></div>
<div class="hd" style="left:0;top:307px;width:21px;background:none">21</div>
<div class="a" style="left:0;top:325px;width:20.5px;height:1px;background:#9c988f"></div>
<div class="a" style="left:0;top:315.5px;width:20.5px;height:1px;background:#efede8"></div>
<div class="hd" style="left:0;top:317.5px;width:21px;background:none">22</div>
<div class="a" style="left:0;top:335.5px;width:20.5px;height:1px;background:#9c988f"></div>
<div class="a" style="left:0;top:326px;width:20.5px;height:1px;background:#efede8"></div>
<div class="hd" style="left:0;top:328px;width:21px;background:none">23</div>
<div class="a" style="left:0;top:346px;width:20.5px;height:1px;background:#9c988f"></div>
<div class="a" style="left:0;top:336.5px;width:20.5px;height:1px;background:#efede8"></div>
<div class="hd" style="left:0;top:338.5px;width:21px;background:none">24</div>
<div class="a" style="left:0;top:356.5px;width:20.5px;height:1px;background:#9c988f"></div>
<div class="a" style="left:0;top:347px;width:20.5px;height:1px;background:#efede8"></div>
<div class="hd" style="left:0;top:349px;width:21px;background:none">25</div>
<div class="a" style="left:0;top:367px;width:20.5px;height:1px;background:#9c988f"></div>
<div class="a" style="left:0;top:357.5px;width:20.5px;height:1px;background:#efede8"></div>
<div class="hd" style="left:0;top:359.5px;width:21px;background:none">26</div>
<div class="a" style="left:0;top:377.5px;width:20.5px;height:1px;background:#9c988f"></div>
<div class="a" style="left:0;top:368px;width:20.5px;height:1px;background:#efede8"></div>
<div class="hd" style="left:0;top:370px;width:21px;background:none">27</div>
<div class="a" style="left:0;top:388px;width:20.5px;height:1px;background:#9c988f"></div>
<div class="a" style="left:0;top:378.5px;width:20.5px;height:1px;background:#efede8"></div>
<div class="hd" style="left:0;top:380.5px;width:21px;background:none">28</div>
<div class="a" style="left:0;top:398.5px;width:20.5px;height:1px;background:#9c988f"></div>
<div class="a" style="left:0;top:389px;width:20.5px;height:1px;background:#efede8"></div>
<div class="hd" style="left:0;top:391px;width:21px;background:none">29</div>
<div class="a" style="left:0;top:409px;width:20.5px;height:1px;background:#9c988f"></div>
<div class="a" style="left:0;top:399.5px;width:20.5px;height:1px;background:#efede8"></div>
<div class="hd" style="left:0;top:401.5px;width:21px;background:none">30</div>
<div class="a" style="left:0;top:419.5px;width:20.5px;height:1px;background:#9c988f"></div>
<div class="a" style="left:0;top:410px;width:20.5px;height:1px;background:#efede8"></div>
<div class="hd" style="left:0;top:412px;width:21px;background:none">31</div>
<div class="a" style="left:0;top:430px;width:20.5px;height:1px;background:#9c988f"></div>
<div class="a" style="left:0;top:420.5px;width:20.5px;height:1px;background:#efede8"></div>
<div class="hd" style="left:0;top:422.5px;width:21px;background:none">32</div>
<div class="a" style="left:0;top:440.5px;width:20.5px;height:1px;background:#9c988f"></div>
<div class="a" style="left:0;top:431px;width:20.5px;height:1px;background:#efede8"></div>
<div class="hd" style="left:0;top:433px;width:21px;background:none">33</div>
<div class="a" style="left:0;top:451px;width:20.5px;height:1px;background:#9c988f"></div>
<div class="a" style="left:0;top:441.5px;width:20.5px;height:1px;background:#efede8"></div>
<div class="hd" style="left:0;top:443.5px;width:21px;background:none">34</div>
<div class="a" style="left:0;top:461.5px;width:20.5px;height:1px;background:#9c988f"></div>
<div class="a" style="left:0;top:452px;width:20.5px;height:1px;background:#efede8"></div>
<div class="hd" style="left:0;top:454px;width:21px;background:none">35</div>
<div class="a" style="left:0;top:472px;width:20.5px;height:1px;background:#9c988f"></div>
<div class="a" style="left:0;top:462.5px;width:20.5px;height:1px;background:#efede8"></div>
<div class="hd" style="left:0;top:464.5px;width:21px;background:none">36</div>
<div class="a" style="left:0;top:482.5px;width:20.5px;height:1px;background:#9c988f"></div>
<div class="a" style="left:0;top:473px;width:20.5px;height:1px;background:#efede8"></div>
<div class="hd" style="left:0;top:475px;width:21px;background:none">37</div>
<div class="a" style="left:0;top:493px;width:20.5px;height:1px;background:#9c988f"></div>
<div class="a" style="left:0;top:483.5px;width:20.5px;height:1px;background:#efede8"></div>
<div class="hd" style="left:0;top:485.5px;width:21px;background:none">38</div>
<div class="a" style="left:0;top:503.5px;width:20.5px;height:1px;background:#9c988f"></div>
<div class="a" style="left:0;top:494px;width:20.5px;height:1px;background:#efede8"></div>
<div class="hd" style="left:0;top:496px;width:21px;background:none">39</div>
<div class="hd" style="left:0;top:506.5px;width:21px;background:none">40</div>
<div class="a" style="left:0;top:84px;width:1.2px;height:424px;background:#707070"></div>
<div class="t cell" style="left:23px;top:97.4px">機器 ID</div>
<div class="t cell" style="right:606px;top:97.4px">201</div>
<div class="t cell" style="left:23px;top:107.9px">管理番号</div>
<div class="t cell" style="left:107.7px;top:107.9px">A5B117</div>
<div class="t cell" style="left:23px;top:118.4px">日付</div>
<div class="t cell" style="right:606px;top:118.4px">2006/5/20</div>
<div class="t cell" style="left:23px;top:128.9px">時間</div>
<div class="t cell" style="right:606px;top:128.9px">18:07:29</div>
<div class="t cell" style="left:23px;top:139.4px">ワークNo</div>
<div class="t cell" style="right:606px;top:139.4px">0</div>
<div class="t cell" style="left:23px;top:149.9px">測定開始(ms)</div>
<div class="t cell" style="right:606px;top:149.9px">0</div>
<div class="t cell" style="left:23px;top:160.4px">測定終了(ms)</div>
<div class="t cell" style="right:606px;top:160.4px">20.47</div>
<div class="t cell" style="left:23px;top:170.9px">総合判定</div>
<div class="t cell" style="left:107.7px;top:170.9px">OK</div>
<div class="t cell" style="left:23px;top:181.4px">波形比較判定</div>
<div class="t cell" style="left:107.7px;top:181.4px">OK</div>
<div class="t cell" style="left:23px;top:191.9px">全区間ホールド判定</div>
<div class="t cell" style="left:107.7px;top:191.9px">OK</div>
<div class="t cell" style="left:107.7px;top:212.9px">波形比較NG点</div>
<div class="t cell" style="left:23px;top:223.4px">Y軸(kN)</div>
<div class="t cell" style="left:107.7px;top:223.4px">NONDATA</div>
<div class="t cell" style="left:23px;top:233.9px">X軸(ms)</div>
<div class="t cell" style="left:107.7px;top:233.9px">NONDATA</div>
<div class="t cell" style="left:23px;top:244.4px">領域始点(ms)</div>
<div class="t cell" style="right:606px;top:244.4px">0</div>
<div class="t cell" style="left:23px;top:254.9px">領域終点(ms)</div>
<div class="t cell" style="right:606px;top:254.9px">511.75</div>
<div class="t cell" style="left:23px;top:265.4px">相対比較基準Y軸(kN)</div>
<div class="t cell dash" style="left:107.7px;top:265.4px">---</div>
<div class="t cell" style="left:23px;top:275.9px">相対比較基準X軸(ms)</div>
<div class="t cell dash" style="left:107.7px;top:275.9px">---</div>
<div class="t cell" style="left:23px;top:296.9px">ホールドデータ</div>
<div class="t cell" style="left:107.7px;top:307.4px">区間1</div>
<div class="t cell" style="left:166px;top:307.4px">区間2</div>
<div class="t cell" style="left:220.4px;top:307.4px">区間3</div>
<div class="t cell" style="left:274px;top:307.4px">区間4</div>
<div class="t cell" style="left:318px;top:307.4px">区間5</div>
<div class="t cell" style="left:23px;top:317.9px">Y軸上限(kN)</div>
<div class="t cell" style="right:606px;top:317.9px">99.99</div>
<div class="t cell" style="right:551.6px;top:317.9px">99.99</div>
<div class="t cell dash" style="left:220.4px;top:317.9px">---</div>
<div class="t cell dash" style="left:274px;top:317.9px">---</div>
<div class="t cell dash" style="left:318px;top:317.9px">---</div>
<div class="t cell" style="left:23px;top:328.4px">Y軸(kN)</div>
<div class="t cell" style="left:107.7px;top:328.4px">NONDATA</div>
<div class="t cell" style="left:166px;top:328.4px">NONDATA</div>
<div class="t cell dash" style="left:220.4px;top:328.4px">---</div>
<div class="t cell dash" style="left:274px;top:328.4px">---</div>
<div class="t cell dash" style="left:318px;top:328.4px">---</div>
<div class="t cell" style="left:23px;top:338.9px">Y軸下限(kN)</div>
<div class="t cell" style="right:606px;top:338.9px">-99.99</div>
<div class="t cell" style="right:551.6px;top:338.9px">-99.99</div>
<div class="t cell dash" style="left:220.4px;top:338.9px">---</div>
<div class="t cell dash" style="left:274px;top:338.9px">---</div>
<div class="t cell dash" style="left:318px;top:338.9px">---</div>
<div class="t cell" style="left:23px;top:349.4px">Y軸判定</div>
<div class="t cell" style="left:107.7px;top:349.4px">OK</div>
<div class="t cell" style="left:166px;top:349.4px">OK</div>
<div class="t cell dash" style="left:220.4px;top:349.4px">---</div>
<div class="t cell dash" style="left:274px;top:349.4px">---</div>
<div class="t cell dash" style="left:318px;top:349.4px">---</div>
<div class="t cell" style="left:23px;top:359.9px">X軸上限(ms)</div>
<div class="t cell dash" style="left:107.7px;top:359.9px">---</div>
<div class="t cell dash" style="left:166px;top:359.9px">---</div>
<div class="t cell dash" style="left:220.4px;top:359.9px">---</div>
<div class="t cell dash" style="left:274px;top:359.9px">---</div>
<div class="t cell dash" style="left:318px;top:359.9px">---</div>
<div class="t cell" style="left:23px;top:370.4px">X軸(ms)</div>
<div class="t cell" style="left:107.7px;top:370.4px">NONDATA</div>
<div class="t cell" style="left:166px;top:370.4px">NONDATA</div>
<div class="t cell dash" style="left:220.4px;top:370.4px">---</div>
<div class="t cell dash" style="left:274px;top:370.4px">---</div>
<div class="t cell dash" style="left:318px;top:370.4px">---</div>
<div class="t cell" style="left:23px;top:380.9px">X軸下限(ms)</div>
<div class="t cell dash" style="left:107.7px;top:380.9px">---</div>
<div class="t cell dash" style="left:166px;top:380.9px">---</div>
<div class="t cell dash" style="left:220.4px;top:380.9px">---</div>
<div class="t cell dash" style="left:274px;top:380.9px">---</div>
<div class="t cell dash" style="left:318px;top:380.9px">---</div>
<div class="t cell" style="left:23px;top:391.4px">X軸判定</div>
<div class="t cell dash" style="left:107.7px;top:391.4px">---</div>
<div class="t cell dash" style="left:166px;top:391.4px">---</div>
<div class="t cell dash" style="left:220.4px;top:391.4px">---</div>
<div class="t cell dash" style="left:274px;top:391.4px">---</div>
<div class="t cell dash" style="left:318px;top:391.4px">---</div>
<div class="t cell" style="left:23px;top:401.9px">区間始点(ms)</div>
<div class="t cell" style="right:606px;top:401.9px">0</div>
<div class="t cell" style="right:551.6px;top:401.9px">511.75</div>
<div class="t cell dash" style="left:220.4px;top:401.9px">---</div>
<div class="t cell dash" style="left:274px;top:401.9px">---</div>
<div class="t cell dash" style="left:318px;top:401.9px">---</div>
<div class="t cell" style="left:23px;top:412.4px">区間終点(ms)</div>
<div class="t cell" style="right:606px;top:412.4px">511.75</div>
<div class="t cell" style="right:551.6px;top:412.4px">511.75</div>
<div class="t cell dash" style="left:220.4px;top:412.4px">---</div>
<div class="t cell dash" style="left:274px;top:412.4px">---</div>
<div class="t cell dash" style="left:318px;top:412.4px">---</div>
<div class="t cell" style="left:23px;top:422.9px">使用ホールド</div>
<div class="t cell" style="left:107.7px;top:422.9px">常時比較</div>
<div class="t cell" style="left:166px;top:422.9px">常時比較</div>
<div class="t cell dash" style="left:220.4px;top:422.9px">---</div>
<div class="t cell dash" style="left:274px;top:422.9px">---</div>
<div class="t cell dash" style="left:318px;top:422.9px">---</div>
<div class="t cell" style="left:23px;top:443.9px">波形データ</div>
<div class="t cell" style="left:23px;top:454.4px">X軸(ms)</div>
<div class="t cell" style="left:107.7px;top:454.4px">上限波形(kN)</div>
<div class="t cell" style="left:166px;top:454.4px">測定波形(kN)</div>
<div class="t cell" style="left:220.4px;top:454.4px">下限波形(kN)</div>
<div class="t cell" style="left:274px;top:454.4px">区間1上限</div>
<div class="t cell" style="left:318px;top:454.4px">区間1下限</div>
<div class="t cell" style="left:361.4px;top:454.4px">区間2上限</div>
<div class="t cell" style="left:404.7px;top:454.4px">区間2下限</div>
<div class="t cell" style="left:448.4px;top:454.4px">区間3上限</div>
<div class="t cell" style="left:492px;top:454.4px">区間3下限</div>
<div class="t cell" style="left:535.4px;top:454.4px">区間4上限</div>
<div class="t cell" style="left:579px;top:454.4px">区間4下限</div>
<div class="t cell" style="left:622px;top:454.4px">区間5上限</div>
<div class="t cell" style="left:663px;top:454.4px">区間5下限</div>
<div class="t cell" style="right:664.3px;top:464.9px">0</div>
<div class="t cell" style="right:606px;top:464.9px">99.99</div>
<div class="t cell" style="right:551.6px;top:464.9px">0</div>
<div class="t cell" style="right:498px;top:464.9px">-99.99</div>
<div class="t cell" style="right:454px;top:464.9px">99.99</div>
<div class="t cell" style="right:410.6px;top:464.9px">-99.99</div>
<div class="t cell" style="right:664.3px;top:475.4px">0.25</div>
<div class="t cell" style="right:606px;top:475.4px">99.99</div>
<div class="t cell" style="right:551.6px;top:475.4px">0</div>
<div class="t cell" style="right:498px;top:475.4px">-99.99</div>
<div class="t cell" style="right:454px;top:475.4px">99.99</div>
<div class="t cell" style="right:410.6px;top:475.4px">-99.99</div>
<div class="t cell" style="right:664.3px;top:485.9px">0.5</div>
<div class="t cell" style="right:606px;top:485.9px">99.99</div>
<div class="t cell" style="right:551.6px;top:485.9px">0</div>
<div class="t cell" style="right:498px;top:485.9px">-99.99</div>
<div class="t cell" style="right:454px;top:485.9px">99.99</div>
<div class="t cell" style="right:410.6px;top:485.9px">-99.99</div>
<div class="t cell" style="right:664.3px;top:496.4px">0.75</div>
<div class="t cell" style="right:606px;top:496.4px">99.99</div>
<div class="t cell" style="right:551.6px;top:496.4px">0</div>
<div class="t cell" style="right:498px;top:496.4px">-99.99</div>
<div class="t cell" style="right:454px;top:496.4px">99.99</div>
<div class="t cell" style="right:410.6px;top:496.4px">-99.99</div>
<div class="t cell" style="right:664.3px;top:505.4px">1</div>
<div class="t cell" style="right:606px;top:505.4px">99.99</div>
<div class="t cell" style="right:551.6px;top:505.4px">0</div>
<div class="t cell" style="right:498px;top:505.4px">-99.99</div>
<div class="t cell" style="right:454px;top:505.4px">99.99</div>
<div class="t cell" style="right:410.6px;top:505.4px">-99.99</div>
<div class="a" style="left:755.5px;top:84.5px;width:12.5px;height:423.5px;background:#d4d0c8"></div>
<div class="a" style="left:755.5px;top:84.5px;width:11px;height:423.5px;background:#ebe9e4"></div>
<div class="btn3d" style="left:755.5px;top:84.5px;width:11px;height:4.5px"></div>
<div class="a" style="left:755.5px;top:86.2px;width:11px;height:1.3px;background:#404040"></div>
<div class="btn3d" style="left:755.5px;top:89px;width:11px;height:12px"></div>
<svg style="left:758px;top:93px" width="6" height="4"><path d="M0 3.5h6l-3-3.5z" fill="#000"/></svg>
<div class="btn3d" style="left:755.5px;top:101px;width:11px;height:7.5px"></div>
<div class="btn3d" style="left:755.5px;top:497px;width:11px;height:11px"></div>
<svg style="left:758px;top:501px" width="6" height="4"><path d="M0 0h6l-3 3.5z" fill="#000"/></svg>
<div class="a" style="left:0;top:508px;width:768px;height:12.5px;background:#d4d0c8"></div>
<div class="a" style="left:0;top:508px;width:457px;height:1px;background:#333"></div>
<div class="btn3d" style="left:3px;top:509px;width:11px;height:11px;border-color:#fff #808080 #808080 #fff"></div>
<div class="btn3d" style="left:14px;top:509px;width:11px;height:11px;border-color:#fff #808080 #808080 #fff"></div>
<div class="btn3d" style="left:25px;top:509px;width:11px;height:11px;border-color:#fff #808080 #808080 #fff"></div>
<div class="btn3d" style="left:36px;top:509px;width:11px;height:11px;border-color:#fff #808080 #808080 #fff"></div>
<svg style="left:3px;top:509px" width="44" height="11"><g fill="#000"><rect x="2.5" y="3" width="1" height="5.5"/><path d="M8 3v5.5l-3.5-2.75z"/><path d="M18 3v5.5l-3.5-2.75z"/><path d="M26.5 3v5.5l3.5-2.75z"/><path d="M36 3v5.5l3.5-2.75z"/><rect x="40" y="3" width="1" height="5.5"/></g></svg>
<svg style="left:46px;top:508px" width="110" height="13"><path d="M0.5 0.5 L6 11.5 L96 11.5 L102.5 0.5 Z" fill="#fff" stroke="#000" stroke-width="0.9"/><path d="M0 0.5H103" stroke="#fff" stroke-width="1.2"/></svg>
<div class="t" style="left:54px;top:510px;font-size:8.8px;color:#111" id="tabname">F381_060520180729</div>
<div class="btn3d" style="left:455.5px;top:509px;width:3px;height:11.5px"></div>
<div class="a" style="left:458.5px;top:509px;width:297px;height:11.5px;background:#e9e7e2"></div>
<div class="btn3d" style="left:458.5px;top:509px;width:12px;height:11.5px"></div>
<svg style="left:462.5px;top:511.7px" width="4" height="6"><path d="M3.5 0v6l-3.5-3z" fill="#000"/></svg>
<div class="btn3d" style="left:470.5px;top:509px;width:251px;height:11.5px"></div>
<div class="btn3d" style="left:740px;top:509px;width:11px;height:11.5px"></div>
<svg style="left:744px;top:511.7px" width="4" height="6"><path d="M0 0v6l3.5-3z" fill="#000"/></svg>
<div class="btn3d" style="left:751px;top:509px;width:3.5px;height:11.5px"></div>
<div class="a" style="left:755.5px;top:508.5px;width:11px;height:1.2px;background:#404040"></div>
<div class="a" style="left:755.5px;top:508.5px;width:1.2px;height:11.5px;background:#404040"></div>
<div class="a" style="left:0;top:520.5px;width:768px;height:1px;background:#fff"></div>
<div class="t ui" style="left:10.5px;top:527.5px;font-size:8.7px" id="dr1">図形の調整(R)</div>
<div class="t ui" style="left:120px;top:526.5px;line-height:11px" id="dr2"><span class="hk">ｵｰﾄｼｪｲﾌﾟ</span>(U)</div>
<div class="a" style="left:2.5px;top:523.5px;width:1px;height:16px;background:#fff"></div><div class="a" style="left:3.5px;top:523.5px;width:1px;height:16px;background:#8c8880"></div><div class="a" style="left:4.8px;top:523.5px;width:1px;height:16px;background:#fff"></div><div class="a" style="left:5.8px;top:523.5px;width:1px;height:16px;background:#8c8880"></div><svg style="left:69.5px;top:530.8px" width="5" height="3" viewBox="0 0 5 3"><path d="M0 0h5l-2.5 2.8z" fill="#000"/></svg><svg style="left:173.5px;top:530.8px" width="5" height="3" viewBox="0 0 5 3"><path d="M0 0h5l-2.5 2.8z" fill="#000"/></svg><svg style="left:80px;top:525.5px" width="12" height="12" viewBox="0 0 16 16"><path d="M4.500 1v12l3-3l2 5l2-1l-2-4.500h4z" fill="#fff" stroke="#000" stroke-width="1"/></svg><svg style="left:96px;top:525.5px" width="12" height="12" viewBox="0 0 16 16"><path d="M8 3a5.200 5.200 0 1 0 5.200 5.200" fill="none" stroke="#8c9c8c" stroke-width="2"/><path d="M8 0.500l3.500 2.500l-3.500 2.500z" fill="#8c9c8c"/><circle cx="8" cy="8.200" r="1.200" fill="#8c9c8c"/></svg><svg style="left:183.5px;top:525.5px" width="12" height="12" viewBox="0 0 16 16"><path d="M2 2l12 12" stroke="#222" stroke-width="1"/></svg><svg style="left:200.7px;top:525.5px" width="12" height="12" viewBox="0 0 16 16"><path d="M2 2l10 10" stroke="#111" stroke-width="1.300"/><path d="M14.500 14.500l-6-2l4-4z" fill="#111"/></svg><svg style="left:218px;top:525.5px" width="12" height="12" viewBox="0 0 16 16"><rect x="0.500" y="2.500" width="15" height="11" fill="none" stroke="#111" stroke-width="1.200"/></svg><svg style="left:235.2px;top:525.5px" width="12" height="12" viewBox="0 0 16 16"><ellipse cx="8" cy="8" rx="7.500" ry="5" fill="none" stroke="#111" stroke-width="1.100"/></svg><svg style="left:252.7px;top:525.5px" width="12" height="12" viewBox="0 0 16 16"><rect x="1" y="1" width="14" height="14" fill="#eee" stroke="#222" stroke-width="1.300"/><text x="5.500" y="7.500" font-size="6.500" font-weight="bold" text-anchor="middle" style="font-family:'Liberation Sans',sans-serif" fill="#222">A</text><path d="M9.500 4h3.500M9.500 6.500h3.500M3 9.500h10M3 12h10" stroke="#444" stroke-width=".9"/></svg><svg style="left:270px;top:525.5px" width="12" height="12" viewBox="0 0 16 16"><rect x="1" y="1" width="14" height="14" fill="#eee" stroke="#222" stroke-width="1.300"/><text x="10" y="7.500" font-size="6.500" font-weight="bold" text-anchor="middle" style="font-family:'Liberation Sans',sans-serif" fill="#222">A</text><path d="M4 3v10M6.500 3v10M9 9.500v3.500M11.500 9.500v3.500" stroke="#444" stroke-width=".9"/></svg><svg style="left:287.2px;top:525.5px" width="12" height="12" viewBox="0 0 16 16"><text x="7" y="15" font-size="19" font-weight="bold" font-style="italic" text-anchor="middle" style="font-family:'Liberation Serif',serif" fill="#1828b0">A</text><path d="M13 1.500l1.500-.5v13l-1.500 1z" fill="#888"/></svg><svg style="left:309px;top:525.5px" width="12" height="12" viewBox="0 0 16 16"><path d="M3 7l5-5l5 5l-5 4.500z" fill="#e8e8e8" stroke="#000" stroke-width=".8"/><path d="M8 2c-2-2-3.500 0-2.500 2" fill="none" stroke="#000" stroke-width=".8"/><path d="M11 5c3 0 4 3 3 6c-1-2-2-3-3.500-3z" fill="#1828b0"/><rect x="0.500" y="12.500" width="15" height="3.500" fill="#ffff00"/></svg><svg style="left:334.5px;top:525.5px" width="12" height="12" viewBox="0 0 16 16"><path d="M4 10l7-7l2 2l-7 7z" fill="#1828b0" stroke="#101060" stroke-width=".6"/><path d="M12 2l1.500-2l1.500 1.500l-1.500 2z" fill="#e8e020"/><path d="M2 11.500l2-1.500l2 2l-2.500 1z" fill="#333"/><rect x="0.500" y="12.500" width="15" height="3.500" fill="#2038ff"/></svg><svg style="left:360px;top:525.5px" width="12" height="12" viewBox="0 0 16 16"><text x="8" y="11.500" font-size="14" font-weight="bold" text-anchor="middle" style="font-family:'Liberation Serif',serif" fill="#1828a0">A</text><rect x="0.500" y="12.500" width="15" height="3.500" fill="#ff0000"/></svg><svg style="left:385px;top:525.5px" width="12" height="12" viewBox="0 0 16 16"><rect x="1" y="2.500" width="14" height="1.500" fill="#111"/><rect x="1" y="6.500" width="14" height="2.500" fill="#111"/><rect x="1" y="11" width="14" height="3" fill="#111"/></svg><svg style="left:402.3px;top:525.5px" width="12" height="12" viewBox="0 0 16 16"><path d="M1 3h14" stroke="#333" stroke-width="1" stroke-dasharray="1 1"/><path d="M1 6h14" stroke="#333" stroke-width="1" stroke-dasharray="2 1"/><path d="M1 9.500h14" stroke="#333" stroke-width="1.200" stroke-dasharray="3 1"/><path d="M1 13h14" stroke="#333" stroke-width="1.200" stroke-dasharray="1.500 1"/></svg><svg style="left:420px;top:525.5px" width="12" height="12" viewBox="0 0 16 16"><path d="M3 3h12M1 8h12M3 13h10" stroke="#111" stroke-width="1.300"/><path d="M0.500 3l3.500-2.300v4.600zM15.500 8l-3.500-2.300v4.600zM0.500 13l3.500-2.300v4.600zM15.500 13l-3.500-2.300v4.600z" fill="#111"/></svg><svg style="left:437px;top:525.5px" width="12" height="12" viewBox="0 0 16 16"><rect x="4" y="4" width="11.500" height="11.500" fill="#404040"/><rect x="1" y="1" width="11.500" height="11.500" fill="#109898" stroke="#003838" stroke-width="1"/></svg><svg style="left:453.5px;top:525.5px" width="12" height="12" viewBox="0 0 16 16"><path d="M1 5l4-4h10v10l-4 4h-10z" fill="#e8e8e8" stroke="#888" stroke-width=".6"/><path d="M11 5l4-4v10l-4 4z" fill="#b0b0b0"/><rect x="1" y="5" width="10" height="10" fill="#109898"/></svg><svg style="left:324.8px;top:530.8px" width="5" height="3" viewBox="0 0 5 3"><path d="M0 0h5l-2.5 2.8z" fill="#000"/></svg><svg style="left:350.2px;top:530.8px" width="5" height="3" viewBox="0 0 5 3"><path d="M0 0h5l-2.5 2.8z" fill="#000"/></svg><svg style="left:375.5px;top:530.8px" width="5" height="3" viewBox="0 0 5 3"><path d="M0 0h5l-2.5 2.8z" fill="#000"/></svg><div class="sep" style="left:113.5px;top:523.5px;height:16px;background:#989898"></div><div class="sep" style="left:304px;top:523.5px;height:16px;background:#989898"></div><div class="a" style="left:470px;top:521.500px;width:1px;height:20px;background:#808080"></div>
<div class="a" style="left:0;top:540.7px;width:768px;height:1px;background:#a0a0a0"></div>
<div class="a" style="left:0;top:541.7px;width:768px;height:1px;background:#fff"></div>
<div class="t ui" style="left:5px;top:544.2px;line-height:11px" id="st"><span class="hk">ｺﾏﾝﾄﾞ</span></div>
<div class="sunk" style="left:509px;top:544.3px;width:25px;height:9.7px"></div>
<div class="sunk" style="left:536.5px;top:544.3px;width:83px;height:9.7px"></div>
<div class="sunk" style="left:622px;top:544.3px;width:20px;height:9.7px"></div>
<div class="sunk" style="left:644.6px;top:544.3px;width:24.4px;height:9.7px"></div>
<div class="sunk" style="left:671.5px;top:544.3px;width:21.1px;height:9.7px"></div>
<div class="sunk" style="left:695px;top:544.3px;width:24.5px;height:9.7px"></div>
<div class="sunk" style="left:722px;top:544.3px;width:18.6px;height:9.7px"></div>
<div class="sunk" style="left:743px;top:544.3px;width:20px;height:9.7px"></div>
<div class="sunk" style="left:2px;top:544.3px;width:503px;height:9.7px;border-color:#d4d0c8 #fff #d4d0c8 #d4d0c8"></div>
</body></html>
